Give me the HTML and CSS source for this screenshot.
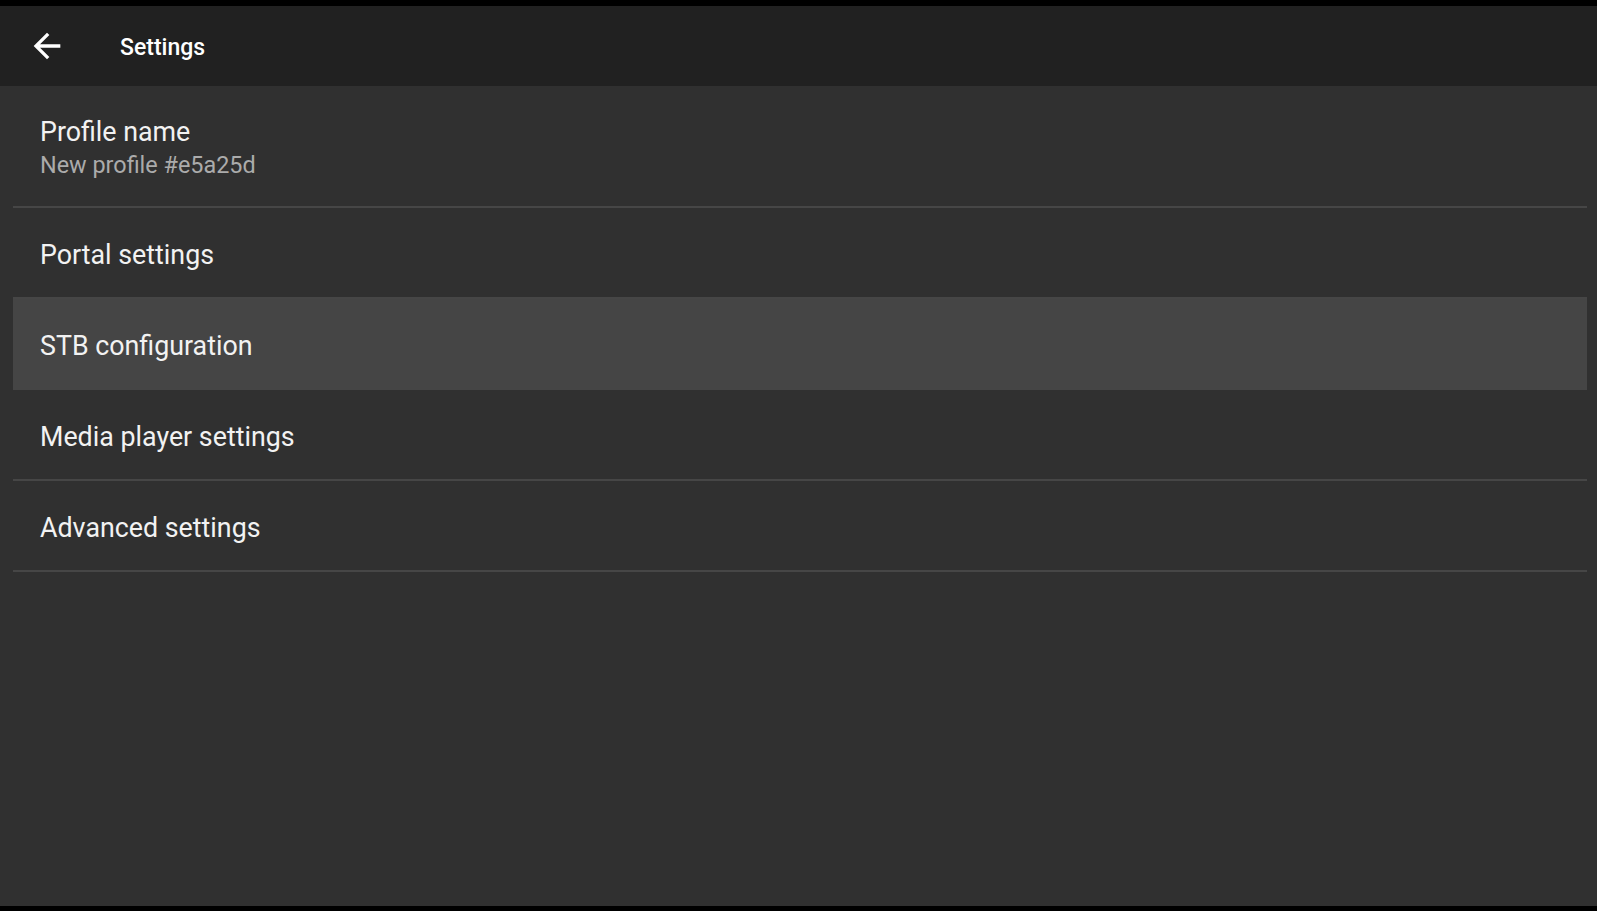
FILE: index.html
```html
<!DOCTYPE html>
<html lang="en">
<head>
  <meta charset="UTF-8" />
  <title>Settings</title>
  <link rel="stylesheet" href="styles.css">
</head>
<body>
  <div class="screen">
    <header class="toolbar">
      <button class="back" aria-label="Back">
        <svg width="40" height="40" viewBox="0 0 24 24">
          <path fill="#fff" d="M20 11H7.83l5.59-5.59L12 4l-8 8 8 8 1.41-1.41L7.83 13H20v-2z"/>
        </svg>
      </button>
      <h1>Settings</h1>
    </header>

    <ul class="prefs">
      <li class="pref pref-tall">
        <div class="pref-title">Profile name</div>
        <div class="pref-summary">New profile #e5a25d</div>
      </li>
      <li class="pref">
        <div class="pref-title">Portal settings</div>
      </li>
      <li class="pref selected">
        <div class="pref-title">STB configuration</div>
      </li>
      <li class="pref">
        <div class="pref-title">Media player settings</div>
      </li>
      <li class="pref">
        <div class="pref-title">Advanced settings</div>
      </li>
    </ul>
  </div>
</body>
</html>
```

FILE: styles.css
```css
html, body {
  margin: 0;
  height: 100%;
}
body {
  background-color: #000;
  font-family: Roboto, 'Noto Sans', sans-serif;
  padding: 6px 0 5px;
  box-sizing: border-box;
}
.screen {
  background-color: #303030;
  height: 900px;
  display: flex;
  flex-direction: column;
}
.toolbar {
  background-color: #212121;
  height: 80px;
  display: flex;
  align-items: center;
  flex-shrink: 0;
}
.back {
  background: none;
  border: none;
  padding: 0;
  margin-left: 27px;
  width: 40px;
  height: 40px;
  display: flex;
  cursor: pointer;
}
.toolbar h1 {
  margin: 2px 0 0 53px;
  color: #fff;
  font-size: 23px;
  font-weight: 500;
}
.prefs {
  list-style: none;
  margin: 0 10px 0 13px;
  padding: 0;
}
.pref {
  height: 91px;
  border-bottom: 2px solid #464646;
  display: flex;
  flex-direction: column;
  justify-content: center;
  padding: 4px 0 0 27px;
  box-sizing: border-box;
}
.pref-tall {
  justify-content: flex-start;
  padding-top: 30px;
  height: 122px;
}
.selected {
  background-color: #454545;
  border-bottom-color: #454545;
}
.pref-title {
  color: #f2f2f2;
  font-size: 26.8px;
  line-height: 32px;
}
.pref-summary {
  color: #ababab;
  font-size: 23.4px;
  line-height: 28px;
  margin-top: 3px;
}
```
